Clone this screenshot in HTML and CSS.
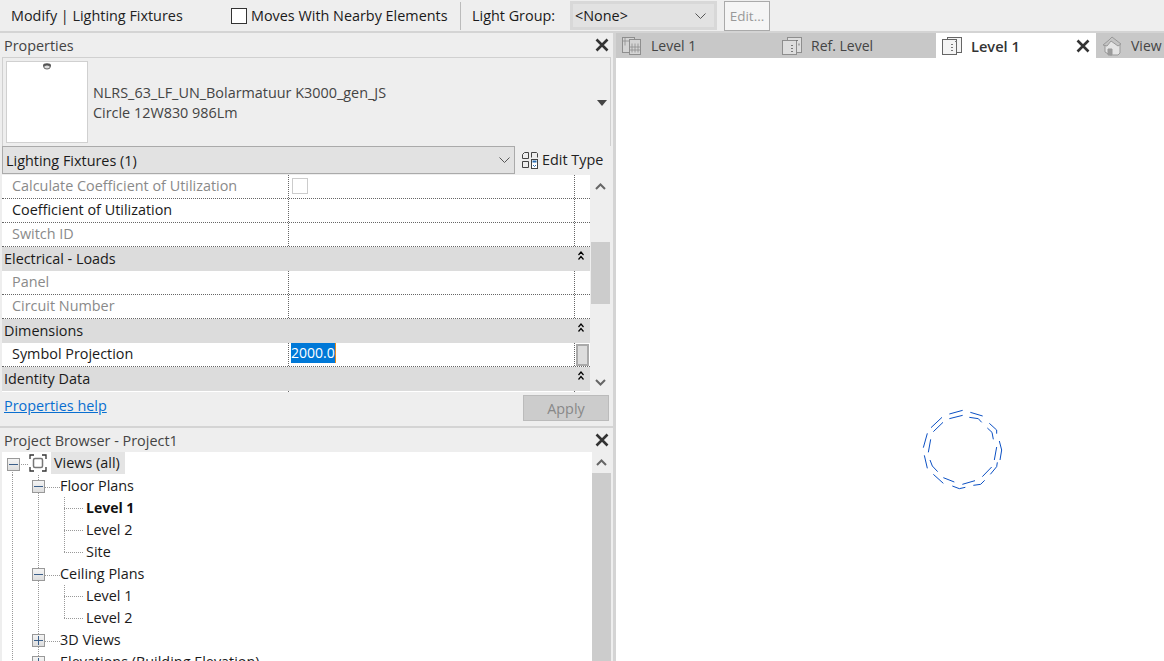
FILE: index.html
```html
<!DOCTYPE html>
<html lang="en">
<head>
  <meta charset="UTF-8">
  <title>Modify | Lighting Fixtures</title>
  <link rel="stylesheet" href="styles.css">
</head>
<body>
  <!-- options bar -->
  <header class="optionsbar">
    <span class="ctx-title">Modify | Lighting Fixtures</span>
    <label class="moves"><span class="checkbox"></span>Moves With Nearby Elements</label>
    <span class="bar-sep"></span>
    <span class="group-label">Light Group:</span>
    <div class="group-select">
      <span>&lt;None&gt;</span>
      <svg class="chev" width="11" height="6" viewBox="0 0 11 6"><path d="M.5.5l5 5 5-5" fill="none" stroke="#555"/></svg>
    </div>
    <button class="edit-btn">Edit...</button>
  </header>

  <div class="main">
    <div class="leftcol">
      <!-- properties palette -->
      <section class="properties">
        <div class="palette-head">
          <span>Properties</span>
          <svg class="close" width="14" height="14" viewBox="0 0 14 14"><path d="M1.5 1.5l11 11M12.5 1.5l-11 11" stroke="#333" stroke-width="2.6"/></svg>
        </div>
        <div class="type-box">
          <div class="thumb">
            <svg width="10" height="7" viewBox="0 0 10 7"><ellipse cx="5" cy="2.5" rx="4" ry="2.2" fill="#555"/><ellipse cx="5" cy="4" rx="3.2" ry="2" fill="#ddd" stroke="#444" stroke-width=".8"/></svg>
          </div>
          <div class="type-name">
            <div>NLRS_63_LF_UN_Bolarmatuur K3000_gen_JS</div>
            <div>Circle 12W830 986Lm</div>
          </div>
          <svg class="type-arrow" width="10" height="6" viewBox="0 0 10 6"><path d="M0 0h10L5 6z" fill="#444"/></svg>
        </div>
        <div class="filter-row">
          <div class="filter-select">
            <span>Lighting Fixtures (1)</span>
            <svg class="chev" width="11" height="6" viewBox="0 0 11 6"><path d="M.5.5l5 5 5-5" fill="none" stroke="#555"/></svg>
          </div>
          <div class="edit-type">
            <svg width="18" height="18" viewBox="0 0 18 18" fill="none" stroke="#444"><path d="M1.5 7.500v-4l2-2h4v6zM10.500 6.500v-5h5l1 1v4M1.500 16.500v-6h6v6z"/><rect x="10.500" y="8.500" width="6" height="9" fill="#fff"/><path d="M11.500 10.500h4" stroke="#2b6cb0" stroke-width="2"/><path d="M12 14l1.500 1.500L15 14" stroke="#2b6cb0"/></svg>
            <span>Edit Type</span>
          </div>
        </div>
        <div class="grid-wrap">
          <div class="propgrid">
            <div class="row off"><div class="c-name">Calculate Coefficient of Utilization</div><div class="c-val"><span class="cb-off"></span></div><div class="c-end"></div></div>
            <div class="row"><div class="c-name">Coefficient of Utilization</div><div class="c-val"></div><div class="c-end"></div></div>
            <div class="row off"><div class="c-name">Switch ID</div><div class="c-val"></div><div class="c-end"></div></div>
            <div class="group"><span>Electrical - Loads</span><svg class="fold" width="6" height="9" viewBox="0 0 6 9"><path d="M.5 4L3 1l2.500 3M.5 8.500L3 5.500l2.500 3" fill="none" stroke="#000" stroke-width="1.200"/></svg></div>
            <div class="row off"><div class="c-name">Panel</div><div class="c-val"></div><div class="c-end"></div></div>
            <div class="row off"><div class="c-name">Circuit Number</div><div class="c-val"></div><div class="c-end"></div></div>
            <div class="group"><span>Dimensions</span><svg class="fold" width="6" height="9" viewBox="0 0 6 9"><path d="M.5 4L3 1l2.500 3M.5 8.500L3 5.500l2.500 3" fill="none" stroke="#000" stroke-width="1.200"/></svg></div>
            <div class="row"><div class="c-name">Symbol Projection</div><div class="c-val"><span class="selected">2000.0</span></div><div class="c-end"><span class="mini-btn"></span></div></div>
            <div class="group"><span>Identity Data</span><svg class="fold" width="6" height="9" viewBox="0 0 6 9"><path d="M.5 4L3 1l2.500 3M.5 8.500L3 5.500l2.500 3" fill="none" stroke="#000" stroke-width="1.200"/></svg></div>
            <div class="grid-tail"><div class="c-name"></div><div class="c-val"></div><div class="c-end"></div></div>
          </div>
          <div class="vscroll props-scroll">
            <svg class="sc-up" width="11" height="7" viewBox="0 0 11 7"><path d="M1 6l4.500-4.500L10 6" fill="none" stroke="#666" stroke-width="2"/></svg>
            <div class="sc-thumb"></div>
            <svg class="sc-down" width="11" height="7" viewBox="0 0 11 7"><path d="M1 1l4.500 4.500L10 1" fill="none" stroke="#666" stroke-width="2"/></svg>
          </div>
        </div>
        <div class="prop-foot">
          <a class="help" href="#">Properties help</a>
          <button class="apply">Apply</button>
        </div>
      </section>

      <!-- project browser -->
      <section class="browser">
        <div class="palette-head browser-head">
          <span>Project Browser - Project1</span>
          <svg class="close" width="14" height="14" viewBox="0 0 14 14"><path d="M1.5 1.5l11 11M12.5 1.5l-11 11" stroke="#333" stroke-width="2.6"/></svg>
        </div>
        <div class="browser-body">
          <div class="tree">
            <div class="tnode top">
              <span class="cell root lower hline"><span class="toggle minus"></span></span>
              <svg class="views-icon" width="18" height="18" viewBox="0 0 18 18" fill="none"><path d="M1 5V1h4M13 1h4v4M17 13v4h-4M5 17H1v-4" stroke="#333" stroke-width="1.300"/><rect x="4.500" y="4.500" width="9" height="9" rx="1.500" stroke="#777" stroke-width="1.500"/></svg>
              <span class="label hilite">Views (all)</span>
            </div>
            <div class="tnode">
              <span class="cell root v"></span>
              <span class="cell wide hline"><span class="toggle minus"></span></span>
              <span class="label">Floor Plans</span>
            </div>
            <div class="tnode">
              <span class="cell root v"></span><span class="cell v"></span>
              <span class="cell wide branch"></span>
              <span class="label current">Level 1</span>
            </div>
            <div class="tnode">
              <span class="cell root v"></span><span class="cell v"></span>
              <span class="cell wide branch"></span>
              <span class="label">Level 2</span>
            </div>
            <div class="tnode">
              <span class="cell root v"></span><span class="cell v"></span>
              <span class="cell wide branch end"></span>
              <span class="label">Site</span>
            </div>
            <div class="tnode">
              <span class="cell root v"></span>
              <span class="cell wide hline"><span class="toggle minus"></span></span>
              <span class="label">Ceiling Plans</span>
            </div>
            <div class="tnode">
              <span class="cell root v"></span><span class="cell v"></span>
              <span class="cell wide branch"></span>
              <span class="label">Level 1</span>
            </div>
            <div class="tnode">
              <span class="cell root v"></span><span class="cell v"></span>
              <span class="cell wide branch end"></span>
              <span class="label">Level 2</span>
            </div>
            <div class="tnode">
              <span class="cell root v"></span>
              <span class="cell wide hline"><span class="toggle plus"></span></span>
              <span class="label">3D Views</span>
            </div>
            <div class="tnode">
              <span class="cell root v"></span>
              <span class="cell wide hline"><span class="toggle plus"></span></span>
              <span class="label">Elevations (Building Elevation)</span>
            </div>
          </div>
          <div class="vscroll tree-scroll">
            <svg class="sc-up" width="11" height="7" viewBox="0 0 11 7"><path d="M1 6l4.500-4.500L10 6" fill="none" stroke="#666" stroke-width="2"/></svg>
            <div class="sc-thumb"></div>
          </div>
        </div>
      </section>
    </div>

    <!-- view area -->
    <div class="viewarea">
      <nav class="tabs">
        <div class="tab">
          <svg class="tab-icon" width="20" height="20" viewBox="0 0 20 20" fill="#d4d4d4" stroke="#8e8e8e"><rect x=".5" y="1.500" width="12" height="15"/><rect x="7.500" y="3.500" width="11" height="15"/><path d="M3 1.500v8M1 5h6M10 7.500v9M13 7.500v9M16 7.500v9M8 11h10M8 14h10" fill="none" stroke-width=".8"/></svg>
          <span>Level 1</span>
        </div>
        <div class="tab">
          <svg class="tab-icon" width="20" height="20" viewBox="0 0 20 20" fill="#dedede" stroke="#8e8e8e"><rect x="5.500" y="1.500" width="14" height="15"/><rect x=".5" y="4.500" width="14" height="14"/><path d="M9 9.500h2M9 12.500h2M9 15.500h2M14 4.500h2M17 7.500v2" stroke="#777"/></svg>
          <span>Ref. Level</span>
        </div>
        <div class="tab active">
          <svg class="tab-icon" width="20" height="20" viewBox="0 0 20 20" fill="#f4f4f4" stroke="#666"><rect x="5.500" y="1.500" width="14" height="15"/><rect x=".5" y="3.500" width="14" height="15"/><path d="M9 8.500h2M9 11.500h2M9 14.500h2M13 5.500h2" stroke="#777"/></svg>
          <span>Level 1</span>
          <svg class="tab-close" width="14" height="14" viewBox="0 0 14 14"><path d="M1.500 1.500l11 11M12.500 1.500l-11 11" stroke="#333" stroke-width="2.600"/></svg>
        </div>
        <div class="tab">
          <svg class="tab-icon" width="20" height="20" viewBox="0 0 20 20" stroke="#999" stroke-linejoin="round"><path d="M3 9v7l5 3h8l2-2V9L10 2z" fill="#e4e4e4"/><path d="M1 9l6-5 3-3 9 7-3 2-7-5-4 5z" fill="#c4c4c4"/><path d="M6 13h4v6H6z" fill="#9c9c9c"/></svg>
          <span>View</span>
        </div>
      </nav>
      <div class="canvas">
        <svg class="fixture" width="105" height="105" viewBox="0 0 315 315" fill="none" stroke="#0b50c4" stroke-width="3">
          <path d="M118 57L158 46M118 71L158 61"/>
          <path d="M181 52L218 63M178 67L205 71L215 82"/>
          <path d="M238 85L260 105V116M232 99L246 112L250 133"/>
          <path d="M268 138L275 165L270 195M260 156L253 195"/>
          <path d="M262 202L260 215L241 238M245 216L217 245"/>
          <path d="M224 256L212 268L190 271M195 257L157 268"/>
          <path d="M166 277L148 281L127 273M133 261L100 248"/>
          <path d="M100 265L70 238M83 230L67 213L60 195"/>
          <path d="M43 181L52 220"/>
          <path d="M40 158L52 115M55 172L62 133"/>
          <path d="M63 98L96 67M70 110L99 82"/>
        </svg>
      </div>
    </div>
  </div>
</body>
</html>
```

FILE: styles.css
```css
/* layout */
html, body { height: 100%; }
body {
  margin: 0;
  overflow: hidden;
  background: #eee;
  color: #1a1a1a;
  font-family: "Open Sans", "Noto Sans", Arial, sans-serif;
  font-size: 14.4px;
}
.main { display: flex; height: 628px; }
.leftcol {
  width: 613px;
  flex: none;
  display: flex;
  flex-direction: column;
  border-right: 3px solid #d4d4d4;
}
.chev { flex: none; }

/* options bar */
.optionsbar {
  height: 31px;
  display: flex;
  align-items: center;
  padding-left: 11px;
  border-bottom: 2px solid #d4d4d4;
  background: #eee;
}
.ctx-title { width: 220px; flex: none; color: #222; }
.moves { display: flex; align-items: center; width: 229px; flex: none; }
.checkbox {
  width: 14px;
  height: 14px;
  border: 1px solid #333;
  background: #fff;
  margin-right: 4px;
}
.bar-sep { width: 1px; height: 28px; background: #bbb; flex: none; }
.group-label { margin-left: 11px; width: 98px; flex: none; }
.group-select {
  width: 131px;
  height: 23px;
  border: 3px solid #d8d8d8;
  background: #e2e2e2;
  display: flex;
  align-items: center;
  justify-content: space-between;
  padding: 0 8px 0 2px;
  flex: none;
}
.edit-btn {
  margin-left: 7px;
  width: 46px;
  height: 30px;
  border: 1px solid #aaa;
  background: #f5f5f5;
  color: #999;
  font: inherit;
  font-size: 13.5px;
  padding: 0;
  flex: none;
}

/* palettes */
.palette-head {
  height: 24px;
  display: flex;
  align-items: center;
  justify-content: space-between;
  padding: 0 4px;
  color: #444;
}
.close { flex: none; }
.type-box {
  height: 89px;
  margin-left: 2px;
  width: 609px;
  border: 1px solid #d0d0d0;
  border-bottom: 0;
  box-sizing: border-box;
  display: flex;
  align-items: center;
}
.thumb {
  width: 80px;
  height: 80px;
  margin-left: 3px;
  border: 1px solid #d0d0d0;
  background: #fff;
  display: flex;
  justify-content: center;
  align-items: flex-start;
  flex: none;
}
.thumb svg { margin-top: 1px; }
.type-name { margin-left: 5px; padding-top: 2px; line-height: 20px; color: #444; flex: 1; }
.type-arrow { margin: 1px 3px 0 0; }

.filter-row { display: flex; height: 29px; margin-left: 2px; align-items: flex-start; }
.filter-select {
  width: 504px;
  height: 26px;
  border: 1px solid #aaa;
  background: #e2e2e2;
  display: flex;
  align-items: center;
  justify-content: space-between;
  padding: 0 4px 0 3px;
}
.edit-type { display: flex; align-items: center; gap: 3px; margin: 4px 0 0 6px; color: #222; }

/* properties grid */
.grid-wrap { display: flex; height: 217px; margin-left: 2px; }
.propgrid { width: 588px; background: #fff; flex: none; }
.row { display: flex; height: 24px; border-bottom: 1px dotted #666; box-sizing: border-box; }
.row.off { color: #8a8a8a; }
.c-name { width: 286px; padding-left: 10px; box-sizing: border-box; line-height: 22px; }
.c-val { width: 286px; border-left: 1px dotted #666; box-sizing: border-box; display: flex; align-items: flex-start; padding-left: 2px; }
.c-end { flex: 1; border-left: 1px dotted #666; display: flex; justify-content: center; }
.group {
  height: 24px;
  background: #dcdcdc;
  display: flex;
  justify-content: space-between;
  line-height: 24px;
  padding-left: 2px;
  box-sizing: border-box;
}
.fold { flex: none; margin: 4px 6px 0 0; }
.cb-off { width: 14px; height: 14px; border: 1px solid #ccc; margin: 3px 0 0 1px; }
.selected {
  background: #0078d7;
  color: #fff;
  font-size: 14px;
  height: 20px;
  line-height: 20px;
  border-right: 1px solid #e88b1e;
}
.mini-btn { width: 9px; height: 18px; border: 2px solid #aaa; background: #ddd; margin-top: 1px; }
.grid-tail { height: 1px; display: flex; }

.vscroll { flex: none; width: 19px; display: flex; flex-direction: column; align-items: center; background: #eee; }
.props-scroll { margin-left: 1px; padding-top: 8px; }
.props-scroll .sc-thumb { width: 19px; height: 62px; background: #ccc; margin-top: 52px; flex: none; }
.sc-down { margin-top: auto; margin-bottom: 6px; }

.prop-foot {
  height: 34px;
  display: flex;
  justify-content: space-between;
  align-items: flex-start;
  padding: 3px 4px 0 4px;
  box-sizing: border-box;
}
.help { color: #0a6fd0; line-height: 20px; margin-top: 1px; }
.apply {
  width: 86px;
  height: 26px;
  border: 1px solid #bbb;
  background: #ccc;
  color: #888;
  font: inherit;
  padding: 0;
}

/* project browser */
.browser { flex: 1; border-top: 2px solid #d4d4d4; overflow: hidden; display: flex; flex-direction: column; }
.browser-body { flex: 1; display: flex; margin-left: 2px; min-height: 0; }
.tree { width: 590px; background: #fff; flex: none; }
.tnode { height: 22px; display: flex; align-items: center; white-space: nowrap; }
.tnode.top { height: 23px; }
.label { line-height: 22px; }
.hilite { background: #e4e4e4; padding: 0 3px; margin: 0 0 1px 4px; width: 68px; }
.current { font-weight: 700; color: #111; font-size: 14px; }
.views-icon { flex: none; margin-bottom: 1px; }

/* connector lines are drawn as backgrounds so they stay in the row flow */
.cell {
  --vd: repeating-linear-gradient(to bottom, #999 0 1px, transparent 1px 2px);
  --hd: repeating-linear-gradient(to right, #999 0 1px, transparent 1px 2px);
  --x: 12px;
  width: 26px;
  height: 22px;
  flex: none;
  display: flex;
  align-items: center;
  background-repeat: no-repeat;
}
.cell.root { width: 24px; --x: 10px; }
.cell.wide { width: 34px; }
.v { background-image: var(--vd); background-size: 1px 100%; background-position: var(--x) 0; }
.hline {
  background-image: var(--hd), var(--vd);
  background-size: 100% 1px, 1px 100%;
  background-position: 19px 12px, var(--x) 0;
}
.cell.root.hline {
  width: 27px;
  height: 23px;
  background-size: 8px 1px, 1px 5px;
  background-position: 19px 12px, 10px 100%;
}
.branch {
  background-image: var(--hd), var(--vd);
  background-size: 20px 1px, 1px 100%;
  background-position: 12px 11px, 12px 0;
}
.branch.end { background-size: 20px 1px, 1px 12px; }
.toggle {
  width: 11px;
  height: 11px;
  margin-left: 6px;
  margin-top: 1px;
  border: 1px solid #999;
  flex: none;
  display: block;
}
.root .toggle { margin-left: 5px; }
.toggle.minus { background: linear-gradient(#3b5f8a, #3b5f8a) center / 9px 1px no-repeat, linear-gradient(#f4f4f4, #ddd); }
.toggle.plus {
  background:
    linear-gradient(#3b5f8a, #3b5f8a) center / 9px 1px no-repeat,
    linear-gradient(#3b5f8a, #3b5f8a) center / 1px 9px no-repeat,
    linear-gradient(#f4f4f4, #ddd);
}
.tree-scroll { padding-top: 7px; }
.tree-scroll .sc-thumb { width: 19px; flex: 1; background: #ccc; margin-top: 7px; }

/* view tabs and canvas */
.viewarea { flex: 1; display: flex; flex-direction: column; min-width: 0; overflow: hidden; }
.tabs { display: flex; height: 25px; background: #c8c8c8; flex: none; font-size: 14px; }
.tab {
  width: 160px;
  flex: none;
  display: flex;
  align-items: center;
  padding-left: 6px;
  box-sizing: border-box;
  color: #444;
}
.tab-icon { flex: none; margin-right: 9px; }
.tab.active { background: #fff; font-weight: 600; font-size: 14.6px; color: #333; }
.tab-close { margin-left: auto; margin-right: 6px; }
.canvas { flex: 1; background: #fff; position: relative; }
.fixture { position: absolute; left: 294px; top: 337px; }
```
